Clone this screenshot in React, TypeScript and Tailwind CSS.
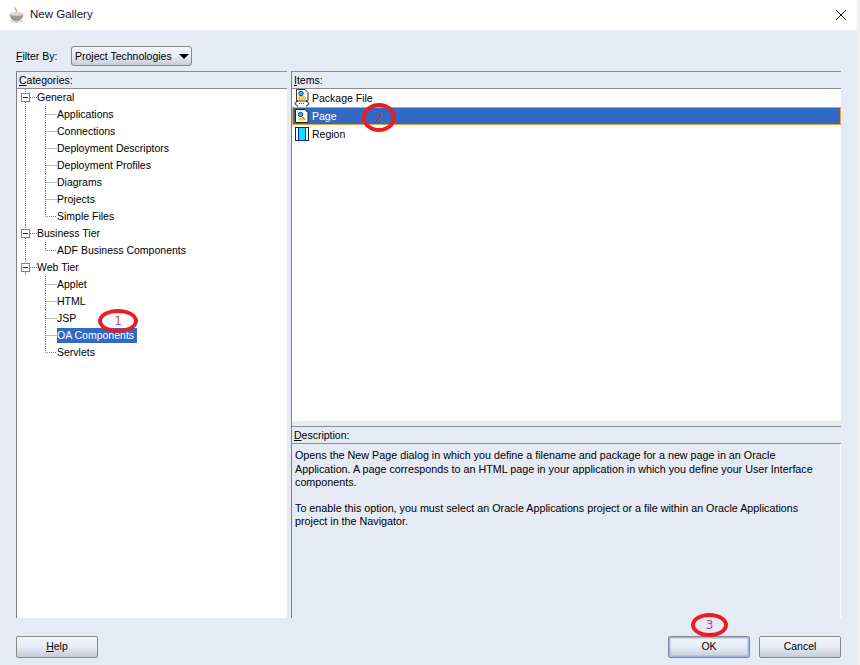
import type { ReactNode } from 'react'

const groups = [
  {
    name: 'General',
    items: [
      'Applications',
      'Connections',
      'Deployment Descriptors',
      'Deployment Profiles',
      'Diagrams',
      'Projects',
      'Simple Files',
    ],
  },
  { name: 'Business Tier', items: ['ADF Business Components'] },
  { name: 'Web Tier', items: ['Applet', 'HTML', 'JSP', 'OA Components', 'Servlets'] },
]

function Key({ children }: { children: ReactNode }) {
  return <span className="underline underline-offset-1">{children}</span>
}

function PanelHead({ children }: { children: ReactNode }) {
  return (
    <div className="h-[18px] shrink-0 border-y border-y-[#8c8c8c] bg-[#e6eaf5] pl-[2px] leading-[16px]">
      {children}
    </div>
  )
}

function GroupRow({ name }: { name: string }) {
  return (
    <div className="flex h-[17px] items-center">
      <svg width="17" height="17" className="ml-[3px] shrink-0">
        <path d="M5.5 0V4M5.5 13V17M10 8.5H17" stroke="#777" strokeDasharray="1 1" fill="none" />
        <rect x="1.5" y="4.5" width="8" height="8" fill="#fff" stroke="#808080" />
        <path d="M3 8.5H8" stroke="#222" />
      </svg>
      <span className="whitespace-nowrap">{name}</span>
    </div>
  )
}

function ItemRow({ name, last, outerLine }: { name: string; last: boolean; outerLine: boolean }) {
  const selected = name === 'OA Components'
  return (
    <div className="flex h-[17px] items-center">
      <svg width="37" height="17" className="ml-[3px] shrink-0">
        {outerLine && <path d="M5.5 0V17" stroke="#777" strokeDasharray="1 1" fill="none" />}
        <path
          d={last ? 'M25.5 0V8.5H37' : 'M25.5 0V17M25.5 8.5H37'}
          stroke="#777"
          strokeDasharray="1 1"
          fill="none"
        />
      </svg>
      <span className={selected ? 'whitespace-nowrap bg-[#316ac5] pr-[3px] text-white' : 'whitespace-nowrap'}>
        {name}
      </span>
    </div>
  )
}

function PackageIcon() {
  return (
    <svg width="16" height="18" viewBox="0 0 16 18" className="shrink-0">
      <path d="M2.5 .5H11L14 3.5V12H2.5Z" fill="#fff" stroke="#333" />
      <path d="M4 8C5 6 10 6 12 8V11H4Z" fill="#f3cf5a" />
      <circle cx="7" cy="4.5" r="2.2" fill="#1fd0e8" stroke="#2a2a80" />
      <path d="M4 11.5L.8 14.5 4 17.5M12 11.5L15.2 14.5 12 17.5" stroke="#000" fill="none" />
      <path d="M5 14.5H11" stroke="#555" strokeDasharray="1 1" />
    </svg>
  )
}

function PageIcon() {
  return (
    <svg width="14" height="14" viewBox="0 0 14 14" className="shrink-0">
      <path d="M.5 .5H10L13 3.5V13.5H.5Z" fill="#fff8e0" stroke="#222" />
      <circle cx="5.5" cy="5.5" r="2.2" fill="#17cfe6" stroke="#23307a" />
      <path d="M3.5 9H9.5V11.5H3.5Z" fill="#f1cd55" />
      <path d="M7 7.5L10 10.5" stroke="#23307a" />
    </svg>
  )
}

function RegionIcon() {
  return (
    <svg width="14" height="14" viewBox="0 0 14 14" className="shrink-0">
      <rect x=".5" y=".5" width="13" height="13" fill="#fff" stroke="#222" />
      <rect x="3.5" y=".5" width="7" height="13" fill="#10e4f4" stroke="#0b1fe0" />
    </svg>
  )
}

function Bubble({ n, className, text }: { n: number; className: string; text: string }) {
  return (
    <div
      className={`absolute flex items-center justify-center rounded-[50%] border-[4px] border-[#ec1c24] font-['DejaVu_Sans',sans-serif] text-[12px] ${className} ${text}`}
    >
      {n}
    </div>
  )
}

function DialogButton({ children, focused }: { children: ReactNode; focused?: boolean }) {
  return (
    <button
      className={`h-[22px] w-[82px] rounded-[2px] border border-[#8a8a8a] bg-gradient-to-b from-[#f2f5fd] via-[#e8ecf7] to-[#c6cbd8] text-black ${
        focused ? 'shadow-[inset_0_0_0_1.5px_#9db8e6]' : ''
      }`}
    >
      {children}
    </button>
  )
}

export default function App() {
  return (
    <div className="relative h-[665px] w-[860px] overflow-hidden bg-[#f0f0f0] font-['Liberation_Sans',sans-serif] text-[10.5px] text-black">
      <div className="flex h-[665px] w-[857px] flex-col bg-[#e6eaf5]">
        <div className="flex h-[30px] shrink-0 items-center bg-white pl-[8px] pr-[10px]">
          <svg width="17" height="18" viewBox="0 0 16 16" className="shrink-0">
            <path d="M7 1C6 3 9 3 8 5" stroke="#d9ad62" strokeWidth="1.5" fill="none" />
            <ellipse cx="8" cy="7" rx="6.5" ry="1.8" fill="#d8d8d8" />
            <path d="M1.5 7.5C2 12 5 14 8 14S14 12 14.5 7.5C12 9 4 9 1.5 7.5Z" fill="#9a9a9a" />
            <path d="M2 13C5 15.5 11 15.5 14 13" stroke="#bbb" fill="none" />
          </svg>
          <span className="ml-[5px] text-[11.5px] text-[#1a1030]">New Gallery</span>
          <svg width="12" height="12" viewBox="0 0 12 12" className="ml-auto">
            <path d="M1 1L11 11M11 1L1 11" stroke="#111" strokeWidth="1" />
          </svg>
        </div>

        <div className="flex h-[41px] shrink-0 items-start pl-[16px] pt-[16px]">
          <span className="mt-[3px] w-[55px]">
            <Key>F</Key>ilter By:
          </span>
          <div className="flex h-[20px] w-[121px] items-center justify-between rounded-[3px] border border-[#8a8a8a] bg-gradient-to-b from-[#f2f5fd] via-[#e8ecf7] to-[#c6cbd8] pl-[3px] pr-[2px]">
            <span className="whitespace-nowrap pt-px">Project Technologies</span>
            <span className="h-0 w-0 border-x-[5px] border-t-[5px] border-x-transparent border-t-black" />
          </div>
        </div>

        <div className="flex h-[547px] shrink-0 gap-[4px] pl-[16px]">
          <div className="flex w-[271px] flex-col border-l border-l-[#808080]">
            <PanelHead>
              <Key>C</Key>ategories:
            </PanelHead>
            <div className="flex-1 bg-white">
              {groups.map((group, g) => (
                <div key={group.name}>
                  <GroupRow name={group.name} />
                  {group.items.map((item, i) => (
                    <ItemRow
                      key={item}
                      name={item}
                      last={i === group.items.length - 1}
                      outerLine={g < groups.length - 1}
                    />
                  ))}
                </div>
              ))}
            </div>
          </div>

          <div className="flex w-[550px] flex-col gap-[5px] border-l border-l-[#808080]">
            <div className="flex h-[350px] flex-col">
              <PanelHead>
                <Key>I</Key>tems:
              </PanelHead>
              <div className="flex-1 bg-white">
                <div className="flex h-[18px] items-center gap-[2px] pl-[2px]">
                  <PackageIcon />
                  <span className="pt-[2px]">Package File</span>
                </div>
                <div className="flex h-[18px] items-center gap-[3px] border border-[#e8a33d] bg-[#316ac5] pl-[2px] text-white">
                  <PageIcon />
                  <span className="pt-[2px]">Page</span>
                </div>
                <div className="flex h-[18px] items-center gap-[3px] pl-[3px]">
                  <RegionIcon />
                  <span className="pt-[2px]">Region</span>
                </div>
              </div>
            </div>

            <div className="flex h-[192px] flex-col">
              <PanelHead>
                <Key>D</Key>escription:
              </PanelHead>
              <div className="flex-1 border-r border-r-white pl-[3px] pr-[12px] pt-[5px] text-[10.75px] leading-[13.5px]">
                <p className="mb-[12px]">
                  Opens the New Page dialog in which you define a filename and package for a new page in an Oracle
                  Application. A page corresponds to an HTML page in your application in which you define your User
                  Interface components.
                </p>
                <p>
                  To enable this option, you must select an Oracle Applications project or a file within an Oracle
                  Applications project in the Navigator.
                </p>
              </div>
            </div>
          </div>
        </div>

        <div className="flex flex-1 items-start justify-between pl-[16px] pr-[16px] pt-[18px]">
          <DialogButton>
            <Key>H</Key>elp
          </DialogButton>
          <div className="flex gap-[9px]">
            <DialogButton focused>OK</DialogButton>
            <DialogButton>Cancel</DialogButton>
          </div>
        </div>
      </div>

      <Bubble n={1} className="left-[98px] top-[309px] h-[24px] w-[40px]" text="text-[#d8436a]" />
      <Bubble n={2} className="left-[362px] top-[103px] h-[29px] w-[34px]" text="text-[#e0203c]" />
      <Bubble n={3} className="left-[691px] top-[613px] h-[24px] w-[37px]" text="text-[#c8358f]" />
    </div>
  )
}
